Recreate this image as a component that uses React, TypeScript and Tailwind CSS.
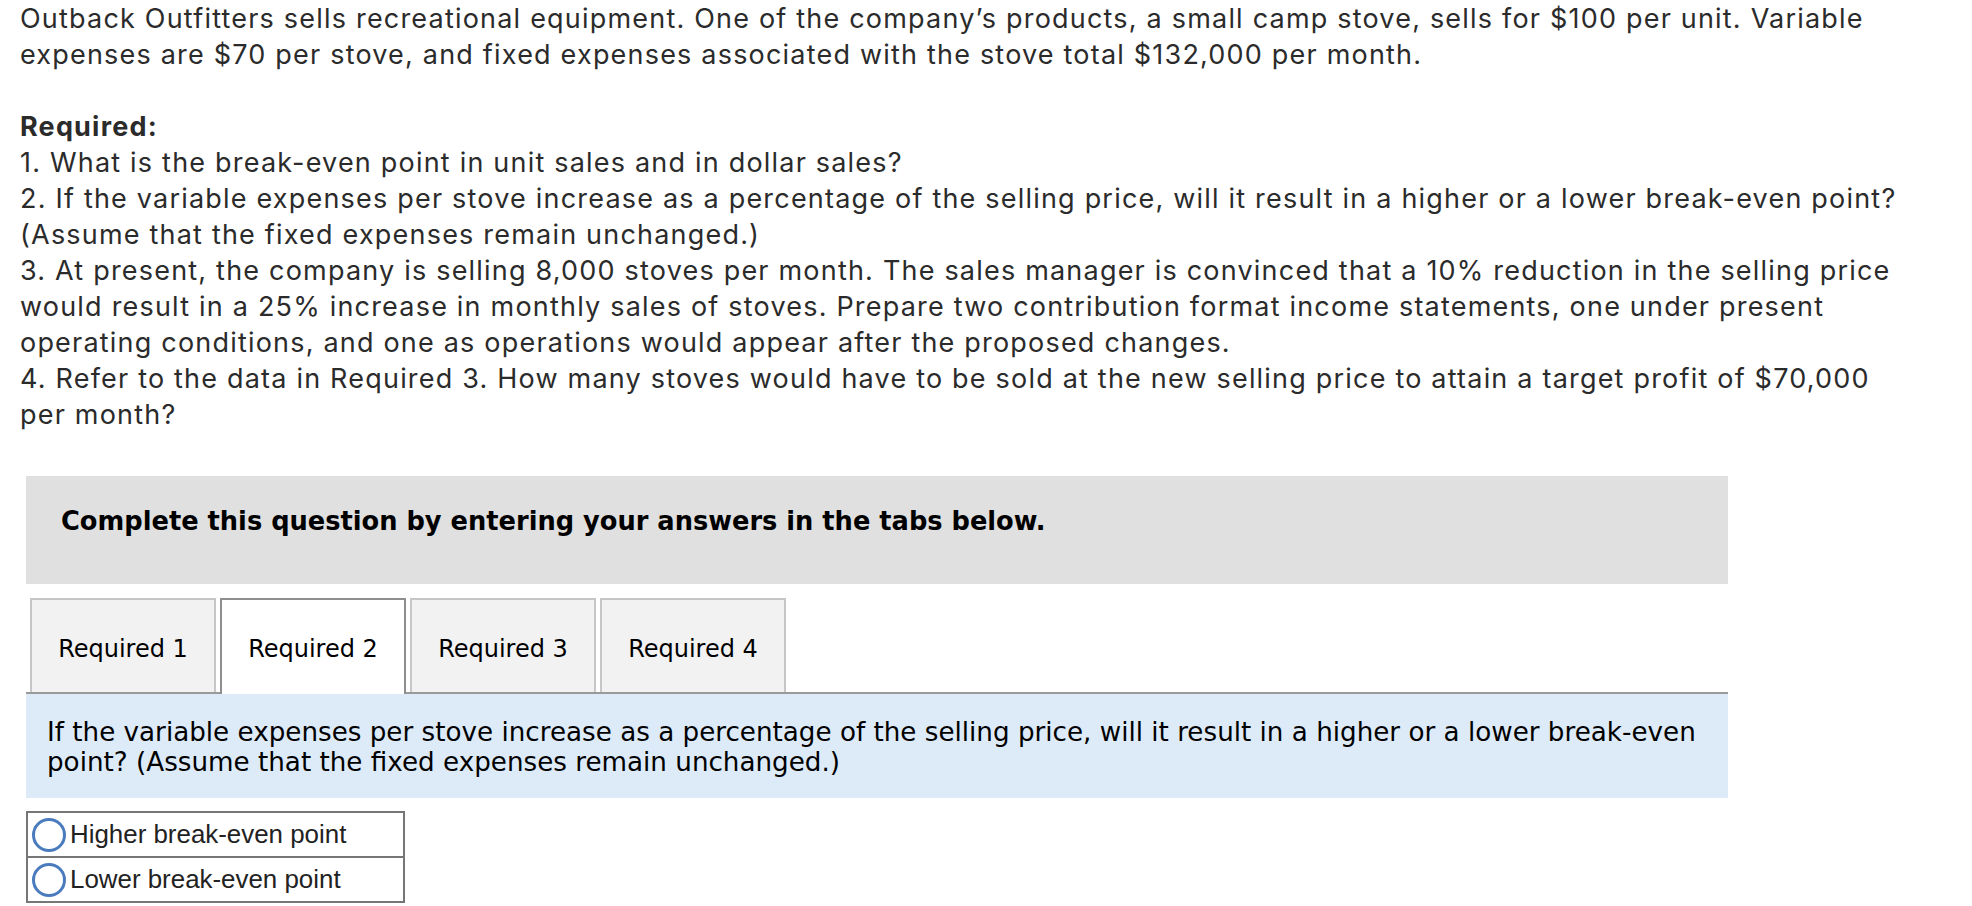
import React from "react";

const tabs = ["Required 1", "Required 2", "Required 3", "Required 4"];

export default function App() {
  return (
    <div className="min-h-[906px] bg-white">
      <div className="pl-5 pt-px font-['Inter',sans-serif] text-[27px] leading-[36px] tracking-[1.2px] text-[#2b2b2b] whitespace-nowrap">
        <p>
          Outback Outfitters sells recreational equipment. One of the company’s products, a small camp stove, sells for $100 per unit. Variable
          <br />
          expenses are $70 per stove, and fixed expenses associated with the stove total $132,000 per month.
        </p>
        <p className="mt-9 font-bold">Required:</p>
        <p>
          1. What is the break-even point in unit sales and in dollar sales?
          <br />
          2. If the variable expenses per stove increase as a percentage of the selling price, will it result in a higher or a lower break-even point?
          <br />
          (Assume that the fixed expenses remain unchanged.)
          <br />
          3. At present, the company is selling 8,000 stoves per month. The sales manager is convinced that a 10% reduction in the selling price
          <br />
          would result in a 25% increase in monthly sales of stoves. Prepare two contribution format income statements, one under present
          <br />
          operating conditions, and one as operations would appear after the proposed changes.
          <br />
          4. Refer to the data in Required 3. How many stoves would have to be sold at the new selling price to attain a target profit of $70,000
          <br />
          per month?
        </p>
      </div>

      <div className="ml-[26px] mt-[43px] w-[1702px]">
        <div className="h-[108px] bg-[#e0e0e0] pl-[35px] pt-[27px] font-['DejaVu_Sans',sans-serif] text-[25.7px] font-bold leading-[36px] text-black whitespace-nowrap">
          Complete this question by entering your answers in the tabs below.
        </div>

        <div className="mt-[14px] flex items-start gap-[4px] border-b-2 border-[#999999] pl-[4px]">
          {tabs.map((t, i) =>
            i === 1 ? (
              <div
                key={t}
                className="-mb-[2px] flex h-[96px] w-[186px] items-center justify-center border-2 border-b-0 border-[#8e8e8e] bg-white pt-[3px] font-['DejaVu_Sans',sans-serif] text-[24px] text-black"
              >
                {t}
              </div>
            ) : (
              <div
                key={t}
                className="flex h-[94px] w-[186px] items-center justify-center border-2 border-b-0 border-[#c6c6c6] bg-[#f2f2f2] pt-[5px] font-['DejaVu_Sans',sans-serif] text-[24px] text-black"
              >
                {t}
              </div>
            )
          )}
        </div>

        <div className="h-[104px] bg-[#ddebf8] pl-[21px] pt-[23px] font-['DejaVu_Sans',sans-serif] text-[26.2px] leading-[30px] text-black whitespace-nowrap">
          If the variable expenses per stove increase as a percentage of the selling price, will it result in a higher or a lower break-even
          <br />
          point? (Assume that the fixed expenses remain unchanged.)
        </div>

        <div className="mt-[13px] w-[379px] border-2 border-[#767676] font-['Liberation_Sans',Arial,sans-serif] text-[25.9px] text-[#222222]">
          {["Higher break-even point", "Lower break-even point"].map((label, i) => (
            <div
              key={label}
              className={`flex items-center pl-[4px] ${i === 0 ? "h-[45px] border-b-2 border-[#767676]" : "h-[43px]"}`}
            >
              <span className="h-[34px] w-[34px] shrink-0 rounded-full border-[3.5px] border-[#4a7bbd] bg-white" />
              <span className="ml-[4px] leading-none">{label}</span>
            </div>
          ))}
        </div>
      </div>
    </div>
  );
}
